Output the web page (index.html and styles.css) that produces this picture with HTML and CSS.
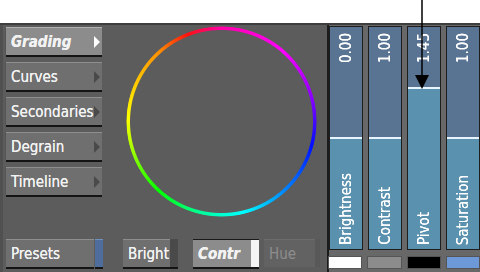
FILE: index.html
```html
<!DOCTYPE html>
<html>
<head>
<meta charset="utf-8">
<link rel="stylesheet" href="styles.css">
</head>
<body>
<div class="top"></div>
<div class="main">
  <div class="nav">
    <div class="menu">
      <div class="btn active"><span class="lbl">Grading</span><span class="tri"></span></div>
      <div class="btn"><span class="lbl">Curves</span><span class="tri"></span></div>
      <div class="btn"><span class="lbl">Secondaries</span><span class="tri"></span></div>
      <div class="btn"><span class="lbl">Degrain</span><span class="tri"></span></div>
      <div class="btn"><span class="lbl">Timeline</span><span class="tri"></span></div>
    </div>
    <div class="bottom-row presets-row">
      <div class="pbtn presets">Presets</div><div class="strip blue"></div>
    </div>
  </div>
  <div class="center">
    <div class="wheel-area">
      <div class="wheel"><div class="dot"></div></div>
    </div>
    <div class="bottom-row modes">
      <div class="pbtn bright">Bright</div><div class="strip dark"></div>
      <div class="pbtn contr">Contr</div><div class="strip white"></div>
      <div class="pbtn hue">Hue</div><div class="strip dim"></div>
    </div>
  </div>
  <div class="sliders">
    <div class="cols">
      <div class="slider" style="--split:110px"><span class="val">0.00</span><span class="name">Brightness</span></div>
      <div class="slider" style="--split:110px"><span class="val">1.00</span><span class="name">Contrast</span></div>
      <div class="slider" style="--split:60px"><span class="val">1.45</span><span class="name">Pivot</span></div>
      <div class="slider" style="--split:110px"><span class="val">1.00</span><span class="name">Saturation</span></div>
    </div>
    <div class="swatches">
      <div class="sw sw-white"></div>
      <div class="sw sw-gray"></div>
      <div class="sw sw-black"></div>
      <div class="sw sw-blue"></div>
    </div>
  </div>
</div>
<svg class="pointer" width="16" height="90" viewBox="0 0 16 90">
  <line x1="8" y1="0" x2="8" y2="78" stroke="#000" stroke-width="1.5"/>
  <polygon points="1,75 15,75 8,89" fill="#000"/>
</svg>
</body>
</html>
```

FILE: styles.css
```css
* { box-sizing: border-box; }
html, body { margin: 0; padding: 0; }
body {
  width: 480px;
  height: 272px;
  background: #fff;
  font-family: "DejaVu Sans Condensed", "DejaVu Sans", sans-serif;
  color: #f2f2f2;
  overflow: hidden;
  position: relative;
}
.top { height: 23px; background: #fff; }
.main {
  height: 249px;
  background: #5c5c5c;
  border-top: 2px solid #3e3e3e;
  display: flex;
}
.nav {
  width: 107px;
  padding: 2px 0 5px 3px;
  display: flex;
  flex-direction: column;
  border-left: 3px solid #505050;
}
.menu { display: flex; flex-direction: column; gap: 7px; }
.btn {
  width: 96px;
  height: 28px;
  background: #6f6f6f;
  border-top: 1px solid #8e8e8e;
  box-shadow: 0 2px 0 #141414, -1px 0 0 #555;
  display: flex;
  align-items: center;
  justify-content: space-between;
  padding: 0 2px 0 5px;
  font-size: 15px;
}
.btn .lbl { text-shadow: 0 0 0.6px #fff; }
.btn .tri {
  width: 0; height: 0;
  border-top: 6px solid transparent;
  border-bottom: 6px solid transparent;
  border-left: 6px solid #4a4a4a;
}
.btn.active { background: #8c8c8c; border-top-color: #b0b0b0; }
.btn.active .lbl { font-style: italic; font-weight: bold; }
.btn.active .tri { border-left-color: #fff; }

.bottom-row {
  margin-top: auto;
  display: flex;
  height: 28px;
}
.pbtn {
  height: 28px;
  background: #6f6f6f;
  border-top: 1px solid #8e8e8e;
  box-shadow: 0 2px 0 #141414;
  font-size: 15px;
  display: flex;
  align-items: center;
  padding-left: 5px;
  text-shadow: 0 0 0.6px #fff;
}
.strip { height: 28px; box-shadow: 0 2px 0 #141414; }
.presets { width: 88px; }
.strip.blue { width: 8px; background: #4e6c9c; margin-left: 1px; border-top: 1px solid #7090c0; }

.center {
  width: 220px;
  display: flex;
  flex-direction: column;
  padding-bottom: 5px;
}
.wheel-area { padding: 1px 0 0 19px; position: relative; }
.wheel {
  width: 191px;
  height: 191px;
  border-radius: 50%;
  position: relative;
  background: conic-gradient(#ff00a8 0deg, #ff00ff 41deg, #8800ff 76deg, #0010ff 105deg, #0090ff 140deg, #00ffff 167deg, #00ff90 195deg, #00ff00 222deg, #b0ff00 255deg, #ffff00 272deg, #ff9000 318deg, #ff1010 339deg, #ff00a8 360deg);
  -webkit-mask: radial-gradient(circle closest-side, transparent 91px, #000 92px, #000 94.5px, transparent 95.5px);
  mask: radial-gradient(circle closest-side, transparent 91px, #000 92px, #000 94.5px, transparent 95.5px);
}
.dot {
  position: absolute;
  left: 93px; top: 93px;
  width: 5px; height: 5px;
  background: #fff;
}
.modes { padding-left: 16px; }
.bright { width: 47px; }
.strip.dark { width: 8px; background: #4a4a4a; }
.contr {
  width: 58px;
  margin-left: 15px;
  background: #8c8c8c;
  border-top: 1px solid #1a1a1a;
  font-style: italic;
  font-weight: bold;
}
.strip.white { width: 8px; background: #f4f4f4; border-top: 1px solid #1a1a1a; }
.hue {
  width: 51px;
  margin-left: 5px;
  background: #626262;
  border-top: 1px solid #6c6c6c;
  color: #8e8e8e;
  text-shadow: none;
  box-shadow: none;
}
.strip.dim { width: 5px; background: #585858; box-shadow: none; }

.sliders {
  width: 153px;
  background: #686868;
  border-left: 2px solid #1c1c1c;
  padding: 1px 0 3px 0;
  display: flex;
  flex-direction: column;
}
.cols { display: flex; gap: 5px; height: 224px; }
.slider {
  width: 34px;
  height: 224px;
  border: 1px solid #1e1e1e;
  background: linear-gradient(#587492 0, #587492 var(--split), #e8f4ff var(--split), #e8f4ff calc(var(--split) + 2px), #5a91ae calc(var(--split) + 2px));
  display: flex;
  flex-direction: column;
  justify-content: space-between;
  align-items: center;
  padding: 6px 0 4px;
  font-size: 15px;
  color: #fff;
}
.val, .name {
  writing-mode: vertical-rl;
  transform: rotate(180deg);
  text-shadow: 0 0 0.5px #fff;
}
.swatches { display: flex; gap: 5px; margin-top: 6px; }
.sw { width: 35px; height: 13px; border: 1px solid #555; }
.sw-white { background: #fff; margin-left: -1px; }
.sw-gray { background: #8c8c8c; }
.sw-black { background: #000; }
.sw-blue { background: #6e99d8; }

.pointer { position: absolute; left: 414px; top: 0; }
```
